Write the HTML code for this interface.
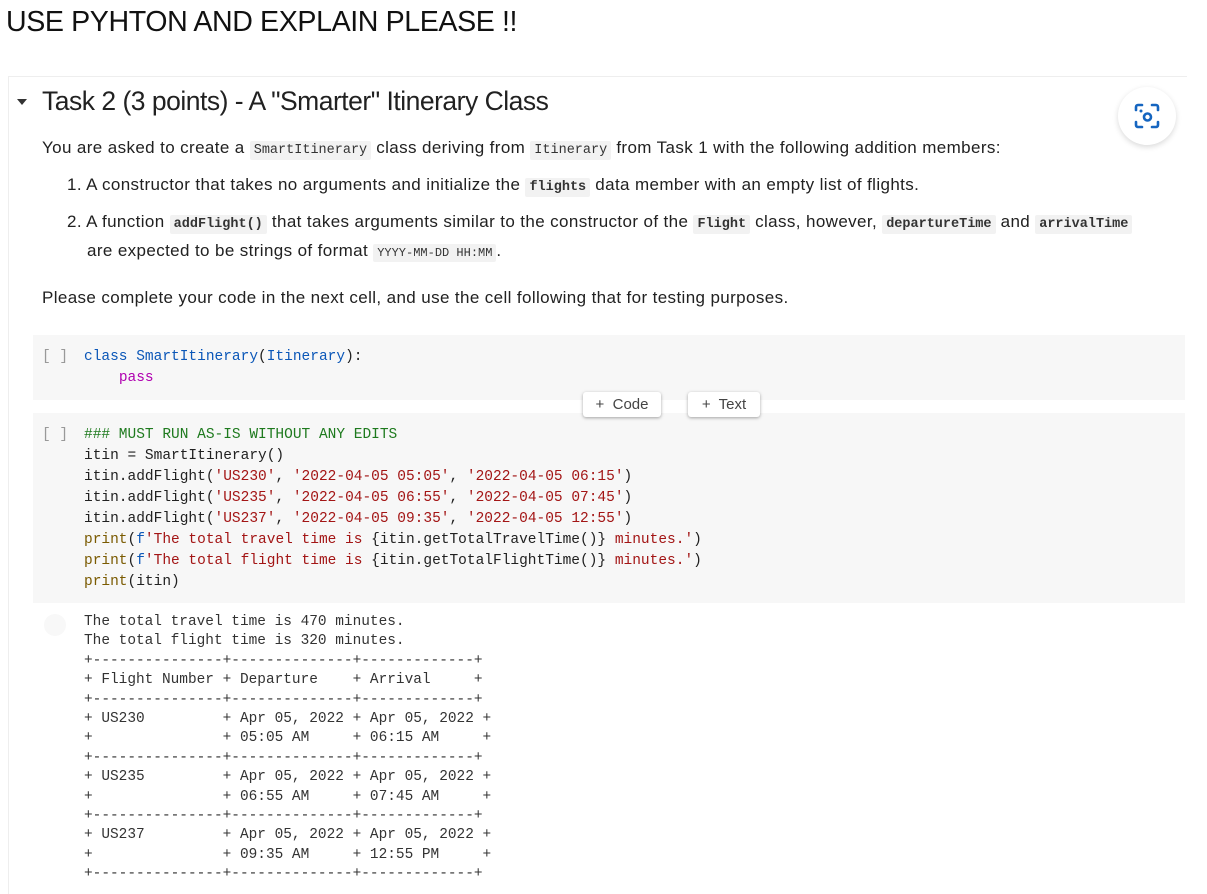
<!DOCTYPE html>
<html><head><meta charset="utf-8"><style>
body{margin:0;width:1207px;height:893px;background:#fff;position:relative;overflow:hidden;font-family:"Liberation Sans",sans-serif;color:#212121}
.a{position:absolute;white-space:nowrap}
.t{font-size:17px;letter-spacing:0.38px;color:#212121}
code{font-family:"Liberation Mono",monospace;font-size:13.5px;background:#f2f2f2;padding:2px 4px;border-radius:2px;letter-spacing:0;color:#333}
code.b{font-weight:bold}
.m{font-family:"Liberation Mono",monospace;font-size:14.5px;line-height:21px;color:#212121;white-space:pre}
.o{font-family:"Liberation Mono",monospace;font-size:14.45px;line-height:19.4px;color:#333;white-space:pre}
.k{color:#0b57b8}.c{color:#1e7a1e}.s{color:#a31515}.p{color:#b000b0}.f{color:#7a5a00}
.btn{position:absolute;height:25px;background:#fff;box-shadow:0 1px 3px rgba(0,0,0,.35);border-radius:3px;font-size:15px;color:#444;line-height:25px;text-align:center}
</style></head><body>
<div class="a" style="left:6px;top:6px;font-size:28.6px;color:#111;letter-spacing:-0.4px">USE PYHTON AND EXPLAIN PLEASE !!</div>
<div class="a" style="left:8px;top:76px;width:1178px;height:817px;border-top:1px solid #eee;border-left:1px solid #eee"></div>
<div class="a" style="left:17px;top:99px;width:0;height:0;border-left:5px solid transparent;border-right:5px solid transparent;border-top:6px solid #333"></div>
<div class="a" style="left:42px;top:86px;font-size:26.5px;letter-spacing:-0.5px;color:#212121">Task 2 (3 points) - A "Smarter" Itinerary Class</div>
<div class="a" style="left:1118px;top:87px;width:58px;height:58px;border-radius:50%;background:#fff;box-shadow:0 2px 6px rgba(0,0,0,.15)">
<svg width="58" height="58" viewBox="0 0 58 58"><g fill="none" stroke="#1565c0" stroke-width="2.6" stroke-linecap="round"><path d="M18 23v-3a2 2 0 0 1 2-2h4M34 18h4a2 2 0 0 1 2 2v3M40 35v3a2 2 0 0 1-2 2h-4M24 40h-4a2 2 0 0 1-2-2v-3"/><circle cx="29.5" cy="30" r="3.5"/></g><circle cx="23" cy="24" r="1.5" fill="#1565c0"/></svg></div>
<div class="a t" style="left:42px;top:138px">You are asked to create a <code>SmartItinerary</code> class deriving from <code>Itinerary</code> from Task 1 with the following addition members:</div>
<div class="a t" style="left:67px;top:175px">1. A constructor that takes no arguments and initialize the <code class="b">flights</code> data member with an empty list of flights.</div>
<div class="a t" style="left:67px;top:212px">2. A function <code class="b">addFlight()</code> that takes arguments similar to the constructor of the <code class="b">Flight</code> class, however, <code class="b">departureTime</code> and <code class="b">arrivalTime</code></div>
<div class="a t" style="left:87px;top:241px">are expected to be strings of format <code style="font-size:12px">YYYY-MM-DD HH:MM</code>.</div>
<div class="a t" style="left:42px;top:288px">Please complete your code in the next cell, and use the cell following that for testing purposes.</div>
<div class="a" style="left:33px;top:335px;width:1152px;height:65px;background:#f7f7f7"></div>
<div class="a" style="left:33px;top:413px;width:1152px;height:190px;background:#f7f7f7"></div>
<div class="a m" style="left:42px;top:347px;color:#999">[ ]</div>
<div class="a m" style="left:42px;top:425px;color:#999">[ ]</div>
<div class="a m" style="left:84px;top:347px"><span class="k">class</span> <span class="k">SmartItinerary</span>(<span class="k">Itinerary</span>):
    <span class="p">pass</span></div>
<div class="a m" style="left:84px;top:425px"><span class="c">### MUST RUN AS-IS WITHOUT ANY EDITS</span>
itin = SmartItinerary()
itin.addFlight(<span class="s">'US230'</span>, <span class="s">'2022-04-05 05:05'</span>, <span class="s">'2022-04-05 06:15'</span>)
itin.addFlight(<span class="s">'US235'</span>, <span class="s">'2022-04-05 06:55'</span>, <span class="s">'2022-04-05 07:45'</span>)
itin.addFlight(<span class="s">'US237'</span>, <span class="s">'2022-04-05 09:35'</span>, <span class="s">'2022-04-05 12:55'</span>)
<span class="f">print</span>(<span class="k">f</span><span class="s">'The total travel time is </span>{itin.getTotalTravelTime()}<span class="s"> minutes.'</span>)
<span class="f">print</span>(<span class="k">f</span><span class="s">'The total flight time is </span>{itin.getTotalFlightTime()}<span class="s"> minutes.'</span>)
<span class="f">print</span>(itin)</div>
<div class="btn" style="left:583px;top:392px;width:78px">+&nbsp; Code</div>
<div class="btn" style="left:688px;top:392px;width:72px">+&nbsp; Text</div>
<div class="a" style="left:44px;top:614px;width:22px;height:22px;border-radius:50%;background:#f8f8f8"></div>
<div class="a o" style="left:84px;top:613px">The total travel time is 470 minutes.
The total flight time is 320 minutes.
+---------------+--------------+-------------+
+ Flight Number + Departure    + Arrival     +
+---------------+--------------+-------------+
+ US230         + Apr 05, 2022 + Apr 05, 2022 +
+               + 05:05 AM     + 06:15 AM     +
+---------------+--------------+-------------+
+ US235         + Apr 05, 2022 + Apr 05, 2022 +
+               + 06:55 AM     + 07:45 AM     +
+---------------+--------------+-------------+
+ US237         + Apr 05, 2022 + Apr 05, 2022 +
+               + 09:35 AM     + 12:55 PM     +
+---------------+--------------+-------------+</div>
</body></html>
